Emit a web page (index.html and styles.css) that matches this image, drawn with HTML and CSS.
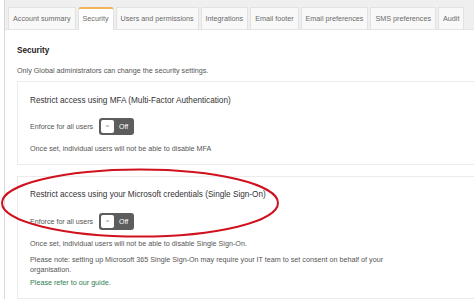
FILE: index.html
```html
<!DOCTYPE html>
<html lang="en">
<head>
    <meta charset="UTF-8">
    <meta name="viewport" content="width=device-width, initial-scale=1.0">
    <title>Security settings</title>
    <link rel="stylesheet" href="styles.css">
</head>
<body>
    <div class="panel">
        <nav class="tabs">
            <a class="tab">Account summary</a>
            <a class="tab active">Security</a>
            <a class="tab">Users and permissions</a>
            <a class="tab">Integrations</a>
            <a class="tab">Email footer</a>
            <a class="tab">Email preferences</a>
            <a class="tab">SMS preferences</a>
            <a class="tab">Audit</a>
        </nav>

        <div class="content">
            <h2>Security</h2>
            <p class="intro">Only Global administrators can change the security settings.</p>

            <div class="card">
                <h3>Restrict access using MFA (Multi-Factor Authentication)</h3>
                <div class="enforce">
                    <span>Enforce for all users</span>
                    <span class="toggle"><span class="knob">=</span><span class="state">Off</span></span>
                </div>
                <p class="note">Once set, individual users will not be able to disable MFA</p>
            </div>

            <div class="card">
                <h3>Restrict access using your Microsoft credentials (Single Sign-On)</h3>
                <div class="enforce">
                    <span>Enforce for all users</span>
                    <span class="toggle"><span class="knob">=</span><span class="state">Off</span></span>
                </div>
                <p class="note">Once set, individual users will not be able to disable Single Sign-On.</p>
                <p class="note extra">Please note: setting up Microsoft 365 Single Sign-On may require your IT team to set consent on behalf of your organisation.</p>
                <p class="note guide">Please refer to our guide.</p>
            </div>
        </div>
    </div>

    <!-- red marker drawn over the screenshot -->
    <svg class="marker" width="474" height="299" viewBox="0 0 474 299">
        <ellipse cx="140" cy="203" rx="138" ry="33.5" fill="none" stroke="#d0121f" stroke-width="2"/>
    </svg>
</body>
</html>
```

FILE: styles.css
```css
body {
    margin: 0;
    background-color: #fff;
    font-family: "Liberation Sans", Arial, sans-serif;
    color: #555;
    position: relative;
    height: 299px;
    overflow: hidden;
}
.panel {
    margin-left: 4px;
    border-left: 1px solid #d8d8d8;
    height: 299px;
}
.tabs {
    display: flex;
    gap: 2px;
    padding: 7px 0 0 3px;
    background-color: #efefef;
    border-bottom: 1px solid #e4e4e4;
    height: 22px;
}
.tab {
    display: block;
    padding: 0 4px;
    height: 21px;
    line-height: 21px;
    font-size: 7.2px;
    white-space: nowrap;
    color: #6a6a6a;
    background-color: #f8f8f8;
    border: 1px solid #e2e2e2;
    border-bottom: none;
}
.tab.active {
    background-color: #fff;
    border-top: 2px solid #f2b35a;
    border-radius: 3px 3px 0 0;
    height: 21px;
    line-height: 20px;
    margin-bottom: -1px;
}
.content {
    padding: 0 0 0 12px;
}
h2 {
    margin: 16px 0 0;
    font-size: 8.2px;
    line-height: 10px;
    color: #222;
}
.intro {
    margin: 10px 0 0;
    font-size: 7.2px;
    line-height: 10px;
}
.card {
    margin-top: 5px;
    padding: 13px 12px 10px;
    border: 1px solid #ebebeb;
    border-right: none;
    background-color: #fff;
}
.card + .card {
    margin-top: 11px;
    padding-top: 12px;
}
h3 {
    margin: 0;
    font-size: 8.2px;
    font-weight: normal;
    line-height: 12px;
    color: #333;
}
.enforce {
    display: flex;
    align-items: center;
    gap: 6px;
    margin-top: 11px;
    font-size: 7.1px;
}
.card + .card .enforce {
    margin-top: 12px;
}
.toggle {
    display: inline-flex;
    align-items: center;
    gap: 5px;
    width: 35px;
    height: 17px;
    box-sizing: border-box;
    padding: 2px;
    background-color: #5d5d5d;
    border-radius: 3px;
}
.knob {
    width: 13px;
    height: 13px;
    background-color: #fff;
    border-radius: 2px;
    color: #999;
    font-size: 6px;
    line-height: 13px;
    text-align: center;
}
.state {
    color: #fff;
    font-size: 7px;
}
.note {
    margin: 9px 0 0;
    font-size: 7.2px;
    line-height: 10px;
}
.note.extra {
    margin-top: 6px;
    max-width: 380px;
}
.note.guide {
    margin-top: 3px;
    color: #2f7d52;
}
.marker {
    position: absolute;
    left: 0;
    top: 0;
    pointer-events: none;
}
```
